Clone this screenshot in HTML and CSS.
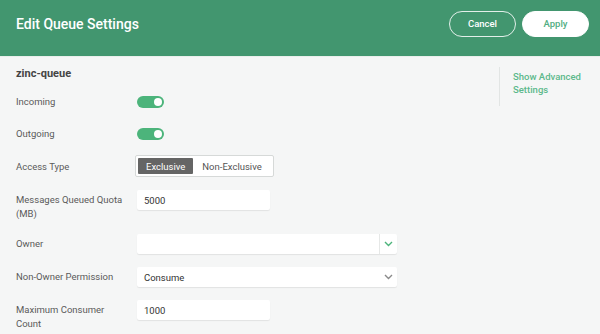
FILE: index.html
```html
<!DOCTYPE html>
<html lang="en">
<head>
    <meta charset="UTF-8">
    <meta name="viewport" content="width=device-width, initial-scale=1.0">
    <title>Edit Queue Settings</title>
    <link rel="stylesheet" href="styles.css">
</head>
<body>
    <header class="top-bar">
        <h1>Edit Queue Settings</h1>
        <div class="actions">
            <button class="btn btn-outline">Cancel</button>
            <button class="btn btn-solid">Apply</button>
        </div>
    </header>

    <main class="content">
        <section class="settings">
            <h2 class="queue-name">zinc-queue</h2>

            <div class="row row-toggle">
                <label class="label">Incoming</label>
                <span class="toggle on"></span>
            </div>

            <div class="row row-toggle">
                <label class="label">Outgoing</label>
                <span class="toggle on"></span>
            </div>

            <div class="row">
                <label class="label label-seg">Access Type</label>
                <div class="segmented">
                    <span class="seg active">Exclusive</span>
                    <span class="seg">Non-Exclusive</span>
                </div>
            </div>

            <div class="row">
                <label class="label">Messages Queued Quota (MB)</label>
                <input class="input input-short" type="text" value="5000">
            </div>

            <div class="row">
                <label class="label">Owner</label>
                <div class="select combo">
                    <span class="select-value"></span>
                    <span class="select-arrow green">
                        <svg width="9" height="6" viewBox="0 0 9 6"><path d="M1 1l3.5 3.5L8 1" fill="none" stroke="currentColor" stroke-width="1.4"/></svg>
                    </span>
                </div>
            </div>

            <div class="row">
                <label class="label">Non-Owner Permission</label>
                <div class="select">
                    <span class="select-value">Consume</span>
                    <span class="select-arrow">
                        <svg width="9" height="6" viewBox="0 0 9 6"><path d="M1 1l3.5 3.5L8 1" fill="none" stroke="currentColor" stroke-width="1.4"/></svg>
                    </span>
                </div>
            </div>

            <div class="row">
                <label class="label">Maximum Consumer Count</label>
                <input class="input input-short" type="text" value="1000">
            </div>
        </section>

        <aside class="side">
            <a class="advanced" href="#">Show Advanced Settings</a>
        </aside>
    </main>
</body>
</html>
```

FILE: styles.css
```css
/* General Styling */
* {
    margin: 0;
    padding: 0;
    box-sizing: border-box;
    font-family: 'Roboto', 'Noto Sans', sans-serif;
}

body {
    width: 600px;
    height: 334px;
    overflow: hidden;
    background-color: #f5f6f6;
    color: #555;
}

/* Header */
.top-bar {
    height: 57px;
    background-color: #42966f;
    display: flex;
    align-items: center;
    justify-content: space-between;
    padding: 0 11px 9px 16px;
    border-bottom: 1px solid #e9eeeb;
}

.top-bar h1 {
    color: #fff;
    font-size: 14px;
    font-weight: 500;
}

.actions {
    display: flex;
    gap: 6px;
}

.btn {
    width: 67px;
    height: 26px;
    border-radius: 13px;
    font-size: 9.5px;
    font-weight: 500;
    cursor: pointer;
}

.btn-outline {
    background: transparent;
    color: #fff;
    border: 1px solid rgba(255, 255, 255, 0.85);
}

.btn-solid {
    background: #fff;
    color: #52ad82;
    border: 1px solid #fff;
}

/* Content */
.content {
    display: flex;
}

.settings {
    width: 499px;
    padding: 10px 16px 0 16px;
}

.queue-name {
    font-size: 11px;
    font-weight: 700;
    color: #444;
    line-height: 14px;
    margin-bottom: 12px;
}

.row {
    display: flex;
    align-items: flex-start;
    margin-bottom: 13px;
}

.label {
    width: 121px;
    flex-shrink: 0;
    font-size: 9.5px;
    line-height: 14px;
    color: #5a5a5a;
    padding-top: 3px;
    padding-right: 12px;
}

.row-toggle {
    height: 18px;
    align-items: center;
}

.row-toggle + .row-toggle {
    height: 19px;
    padding-top: 1px;
}

.row-toggle .label {
    padding-top: 0;
}

.label-seg {
    padding-top: 4px;
}

/* Toggle */
.toggle {
    position: relative;
    width: 27px;
    height: 12px;
    border-radius: 6px;
    background-color: #4cb47b;
}

.toggle::after {
    content: '';
    position: absolute;
    top: 2px;
    right: 2px;
    width: 8px;
    height: 8px;
    border-radius: 50%;
    background: #fff;
}

/* Segmented control */
.segmented {
    display: flex;
    height: 22px;
    padding: 2px;
    margin-left: -2px;
    margin-top: -1px;
    background: #fff;
    border: 1px solid #d6d9d8;
    border-radius: 2px;
}

.seg {
    display: flex;
    align-items: center;
    padding: 0 9px;
    font-size: 9.5px;
    color: #555;
}

.seg.active {
    background-color: #656565;
    color: #fff;
    border-radius: 1px;
    padding: 0 8px;
}

/* Inputs */
.input,
.select {
    height: 20px;
    background: #fff;
    border: none;
    border-radius: 2px;
    box-shadow: 0 1px 1px rgba(0, 0, 0, 0.08);
    font-size: 9.5px;
    color: #333;
    padding: 0 7px;
    outline: none;
}

.input-short {
    width: 133px;
}

.select {
    width: 260px;
    display: flex;
    align-items: center;
    justify-content: space-between;
    padding-right: 0;
}

.select-arrow {
    width: 18px;
    height: 20px;
    display: flex;
    align-items: center;
    justify-content: center;
    color: #8a8a8a;
}

.select-arrow.green {
    color: #4cb47b;
}

.combo .select-arrow {
    border-left: 1px solid #e6e8e7;
}

/* Side panel */
.side {
    flex: 1;
    padding-top: 10px;
}

.advanced {
    display: block;
    border-left: 1px solid #e2e5e4;
    padding: 3px 0 10px 13px;
    font-size: 9.5px;
    font-weight: 500;
    line-height: 13px;
    color: #5cb98b;
    text-decoration: none;
    width: 80px;
    box-sizing: content-box;
}
```
